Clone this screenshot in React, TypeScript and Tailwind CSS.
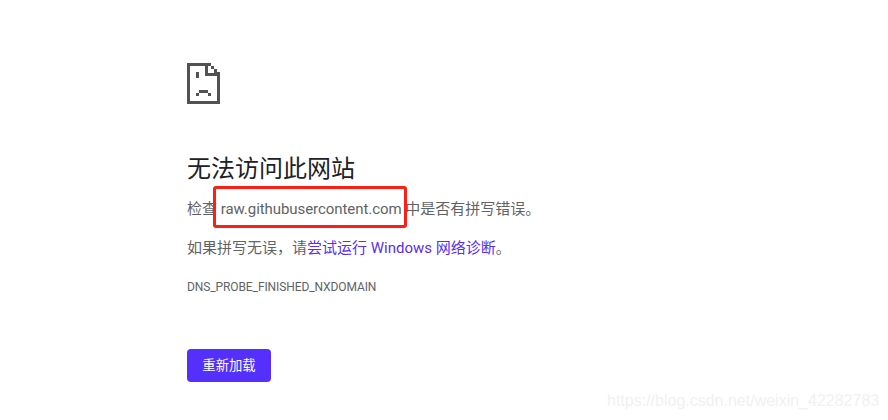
const stack = 'Roboto, "Noto Sans CJK SC", sans-serif';

function SadPage() {
  return (
    <svg width="33" height="41" viewBox="0 0 33 41" fill="#525252" shapeRendering="crispEdges">
      <path d="M0 0h24v3h3v3h3v3h3v32H0zM3 3v35h27V13H18V3zM21 3v7h6V6h-3V3z" fillRule="evenodd" />
      <rect x="9" y="9" width="3" height="6" />
      <rect x="12" y="27" width="9" height="3" />
      <rect x="9" y="30" width="3" height="3" />
      <rect x="21" y="30" width="3" height="3" />
    </svg>
  );
}

export default function App() {
  return (
    <div className="relative h-[420px] w-[888px] overflow-hidden bg-white" style={{ fontFamily: stack }}>
      <div className="flex flex-col items-start pl-[187px] pt-[63px]">
        <SadPage />
        <h1 className="mt-[48px] text-[24px] leading-[34px] font-normal text-[#202124]">无法访问此网站</h1>
        <p className="mt-[11px] text-[15px] leading-[24px] text-[#5f6368]">
          检查 <span className="tracking-[-0.06px]">raw.githubusercontent.com</span> 中是否有拼写错误。
        </p>
        <p className="mt-[15px] text-[15px] leading-[24px] text-[#5f6368]">
          如果拼写无误，请<span className="text-[#5a2df5]">尝试运行 Windows 网络诊断</span>。
        </p>
        <p className="mt-[19px] text-[12px] leading-[16px] tracking-[-0.1px] text-[#5f6368]">DNS_PROBE_FINISHED_NXDOMAIN</p>
        <button className="mt-[54px] h-[33px] w-[84px] rounded-[4px] bg-[#552ffb] text-[13.33px] text-white">重新加载</button>
      </div>
      {/* annotation box on top of the page */}
      <div className="absolute left-[213px] top-[186px] h-[42px] w-[194px] rounded-[3px] border-[3px] border-[#fb1f16]" />
      <div className="absolute left-[607px] top-[391px] text-[16px] leading-[20px] text-[#f1f1f1]" style={{ fontFamily: '"Liberation Sans", sans-serif' }}>
        https://blog.csdn.net/weixin_42282783
      </div>
    </div>
  );
}
